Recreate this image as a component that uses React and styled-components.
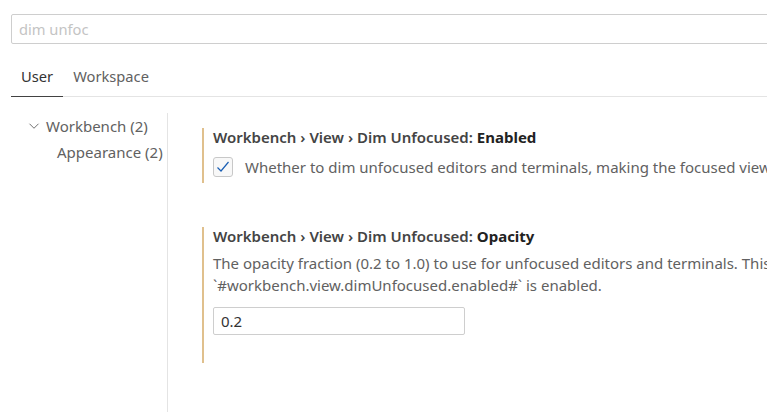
import React from 'react';
import styled, { createGlobalStyle } from 'styled-components';

const GlobalStyle = createGlobalStyle`
  html, body {
    margin: 0;
    padding: 0;
    background: #ffffff;
    overflow: hidden;
  }
  body {
    font-family: 'Noto Sans', 'Open Sans', sans-serif;
    font-size: 15px;
    color: #616161;
  }
`;

const Page = styled.div`
  width: 767px;
  height: 412px;
  overflow: hidden;
  display: flex;
  flex-direction: column;
`;

const SearchRow = styled.div`
  padding: 14px 0 0 11px;
`;

const SearchBox = styled.div`
  height: 30px;
  box-sizing: border-box;
  width: 800px;
  border: 1px solid #cecece;
  border-radius: 2px;
  display: flex;
  align-items: center;
  padding-left: 7px;
  color: #c4c4c4;
  font-size: 14.7px;
`;

const TabBar = styled.div`
  margin: 12px 0 0 11px;
  height: 40px;
  display: flex;
  border-bottom: 1px solid #e4e4e4;
`;

const Tab = styled.div`
  padding: 0 10px;
  display: flex;
  align-items: center;
  font-size: 14.7px;
  color: ${p => (p.active ? '#333333' : '#616161')};
  border-bottom: 1px solid ${p => (p.active ? '#424242' : 'transparent')};
  margin-bottom: -1px;
`;

const Body = styled.div`
  flex: 1;
  display: flex;
  padding-top: 16px;
`;

const Tree = styled.div`
  width: 167px;
  border-right: 1px solid #e4e4e4;
`;

const TreeRow = styled.div`
  height: 26px;
  display: flex;
  align-items: center;
  padding-left: ${p => p.indent}px;
  gap: 6px;
  font-size: 15px;
  color: #616161;
  white-space: nowrap;
`;

const Settings = styled.div`
  flex: 1;
  padding: 15px 0 0 34px;
  display: flex;
  flex-direction: column;
  gap: 44px;
  min-width: 0;
`;

const SettingItem = styled.div`
  border-left: 2px solid #e0c08d;
  padding: 0 0 ${p => p.bottom}px 9px;
  white-space: nowrap;
`;

const Title = styled.div`
  font-size: 15px;
  font-weight: 600;
  color: #444444;
  line-height: 18px;
`;

const Label = styled.span`
  font-weight: 700;
  color: #222222;
`;

const CheckRow = styled.div`
  margin-top: 11px;
  height: 20px;
  display: flex;
  align-items: center;
  gap: 12px;
`;

const CheckBox = styled.div`
  width: 20px;
  height: 20px;
  flex-shrink: 0;
  box-sizing: border-box;
  border: 1px solid #c8c8c8;
  border-radius: 3px;
  background: #f8f8f8;
  display: flex;
  align-items: center;
  justify-content: center;
`;

const Description = styled.div`
  font-size: 15px;
  color: #616161;
  line-height: 22px;
  margin-top: ${p => p.top || 0}px;
`;

const NumberInput = styled.div`
  margin-top: 11px;
  width: 252px;
  height: 28px;
  box-sizing: border-box;
  border: 1px solid #cecece;
  border-radius: 2px;
  display: flex;
  align-items: center;
  padding-left: 7px;
  color: #333333;
  font-size: 15px;
`;

const Chevron = () => (
  <svg width="12" height="12" viewBox="0 0 16 16" fill="none">
    <path d="M2 5 L8 11 L14 5" stroke="#616161" strokeWidth="1.2" />
  </svg>
);

const Check = () => (
  <svg width="16" height="16" viewBox="0 0 16 16" fill="none">
    <path d="M2.5 8.5 L6 12 L13.5 3" stroke="#1a5fb4" strokeWidth="1.2" />
  </svg>
);

export default function App() {
  return (
    <Page>
      <GlobalStyle />
      <SearchRow>
        <SearchBox>dim unfoc</SearchBox>
      </SearchRow>
      <TabBar>
        <Tab active>User</Tab>
        <Tab>Workspace</Tab>
      </TabBar>
      <Body>
        <Tree>
          <TreeRow indent={28}>
            <Chevron />
            <span>Workbench (2)</span>
          </TreeRow>
          <TreeRow indent={57}>Appearance (2)</TreeRow>
        </Tree>
        <Settings>
          <SettingItem bottom={6}>
            <Title>
              Workbench › View › Dim Unfocused: <Label>Enabled</Label>
            </Title>
            <CheckRow>
              <CheckBox>
                <Check />
              </CheckBox>
              <Description>
                Whether to dim unfocused editors and terminals, making the focused view
              </Description>
            </CheckRow>
          </SettingItem>
          <SettingItem bottom={28}>
            <Title>
              Workbench › View › Dim Unfocused: <Label>Opacity</Label>
            </Title>
            <Description top={7}>
              The opacity fraction (0.2 to 1.0) to use for unfocused editors and terminals. This
              <br />
              `#workbench.view.dimUnfocused.enabled#` is enabled.
            </Description>
            <NumberInput>0.2</NumberInput>
          </SettingItem>
        </Settings>
      </Body>
    </Page>
  );
}
